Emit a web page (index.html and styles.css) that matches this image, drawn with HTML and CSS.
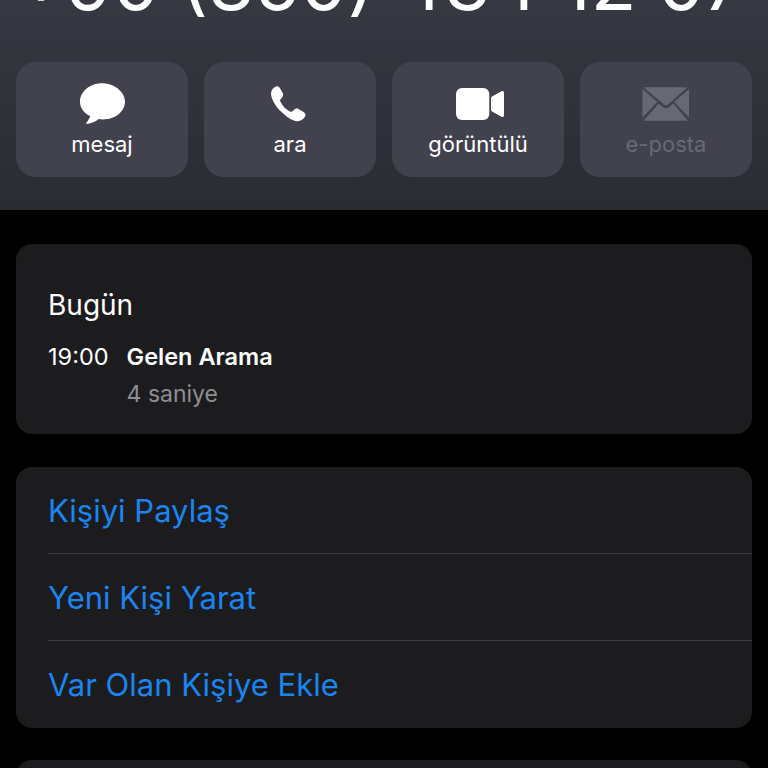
FILE: index.html
```html
<!DOCTYPE html>
<html>

<head>
    <title>Gelen Arama</title>
    <meta charset="utf-8">
    <meta name="viewport" content="width=device-width, initial-scale=1.0">
    <link rel="stylesheet" href="styles.css">
</head>

<body>
    <header class="ust">
        <h1 class="numara">+90 (850) 434 12 07</h1>
        <nav class="eylemler">
            <button class="eylem">
                <svg class="ikon" width="46" height="42" viewBox="0 0 46 42">
                    <path fill="#fff" d="M23 .3C10.800 .3 1 8.600 1 18.700c0 6.200 4 11.400 10.200 14.400-.7 2.400-2.200 4.900-3.800 6.700-.4.600 0 1.200.7 1.100 4.200-.3 8.900-2.300 11.700-4.800 1.300.2 2.700.3 4.200.3 12.200 0 22-8 22-17.700S35.200 .3 23 .3z"/>
                </svg>
                <span>mesaj</span>
            </button>
            <button class="eylem">
                <svg class="ikon" width="46" height="42" viewBox="0 0 46 42">
                    <path fill="#fff" transform="translate(-2.500 0)" d="M8.500 5.600c1.600-1.800 3.400-2.800 4.700-2.300 1.200.5 2.100 1.500 2.800 2.800l2.200 4c.8 1.500.6 3-.4 4.200l-1.700 2c-.6.700-.7 1.500-.3 2.300 1.200 2.400 2.600 4.400 4.300 6.100 1.500 1.500 3.300 2.800 5.500 3.800.8.400 1.600.3 2.300-.3l2-1.800c1.200-1 2.700-1.200 4.100-.4l4.200 2.400c1.300.7 2.300 1.600 2.700 2.700.5 1.400-.4 3.200-2.100 4.700-1.800 1.600-3.900 2.600-6.200 2.500-3.900-.2-9.200-3.100-14.400-8.200C13 26 9.300 20 7.400 15.200 6 11.400 6.200 8.200 8.500 5.600z"/>
                </svg>
                <span>ara</span>
            </button>
            <button class="eylem">
                <svg class="ikon" width="52" height="42" viewBox="0 0 52 42">
                    <rect fill="#fff" x="4" y="5" width="33.300" height="32" rx="6"/>
                    <path fill="#fff" d="M39 15.500c0-.9.300-1.500 1-2l9.500-5.300c1-.6 2.500-.1 2.500 1.300v23c0 1.400-1.500 1.900-2.500 1.300L40 28.500c-.7-.5-1-1.100-1-2z"/>
                </svg>
                <span>görüntülü</span>
            </button>
            <button class="eylem pasif">
                <svg class="ikon" width="48" height="42" viewBox="0 0 48 42">
                    <path fill="#666873" d="M1.500 4.300h44L26 21.500c-1.300 1.100-2.700 1.100-4 0zM.5 6l14.800 13.100L.5 34.500zM47 6v28.500L32.200 19.100zM16.800 20.500l4 3.400c2 1.700 4.400 1.700 6.400 0l4-3.400L46 37.700H1.500z"/>
                </svg>
                <span>e-posta</span>
            </button>
        </nav>
    </header>

    <section class="kart gecmis">
        <h2>Bugün</h2>
        <div class="arama">
            <time>19:00</time>
            <div>
                <p class="tur">Gelen Arama</p>
                <p class="sure">4 saniye</p>
            </div>
        </div>
    </section>

    <section class="kart liste">
        <a class="satir" href="#">Kişiyi Paylaş</a>
        <a class="satir" href="#">Yeni Kişi Yarat</a>
        <a class="satir" href="#">Var Olan Kişiye Ekle</a>
    </section>

    <section class="kart alt"></section>
</body></html>
```

FILE: styles.css
```css
body {
    margin: 0;
    height: 768px;
    overflow: hidden;
    background-color: black;
    color: white;
    font-family: Inter, "Liberation Sans", sans-serif;
}

.ust {
    height: 210px;
    box-sizing: border-box;
    padding: 0 16px;
    background: linear-gradient(#363842, #2a2c32);
    overflow: hidden;
}

.numara {
    height: 62px;
    box-sizing: border-box;
    margin: 0;
    padding: 0 6px 60px 0;
    font-size: 75px;
    font-weight: 400;
    line-height: 38px;
    white-space: nowrap;
    display: flex;
    justify-content: center;
    align-items: flex-end;
}

.eylemler {
    display: grid;
    grid-template-columns: repeat(4, 1fr);
    gap: 16px;
}

.eylem {
    height: 115px;
    padding: 21px 0 0;
    border: none;
    border-radius: 20px;
    background-color: #41424e;
    color: white;
    font-family: inherit;
    font-size: 22px;
    display: flex;
    flex-direction: column;
    align-items: center;
}

.ikon {
    margin-bottom: 6px;
}

.pasif {
    color: #686a75;
}

.kart {
    margin: 0 16px;
    border-radius: 16px;
    background-color: #1c1c1e;
}

.gecmis {
    height: 190px;
    box-sizing: border-box;
    margin-top: 34px;
    padding: 44px 32px 0;
}

.gecmis h2 {
    margin: 0;
    font-size: 28px;
    font-weight: 400;
    line-height: 34px;
}

.arama {
    display: flex;
    gap: 18px;
    margin-top: 20px;
    font-size: 23.500px;
    line-height: 30px;
}

.arama p {
    margin: 0;
}

.tur {
    font-weight: 600;
}

.arama .sure {
    margin-top: 7px;
    font-size: 23px;
    color: #8e8e93;
}

.liste {
    margin-top: 33px;
    padding-left: 32px;
}

.satir {
    display: block;
    height: 87px;
    box-sizing: border-box;
    border-bottom: 1px solid #38383a;
    color: #1a84f0;
    font-size: 31px;
    line-height: 88px;
    text-decoration: none;
}

.satir:last-child {
    border-bottom: none;
}

.alt {
    height: 60px;
    margin-top: 32px;
}
```
